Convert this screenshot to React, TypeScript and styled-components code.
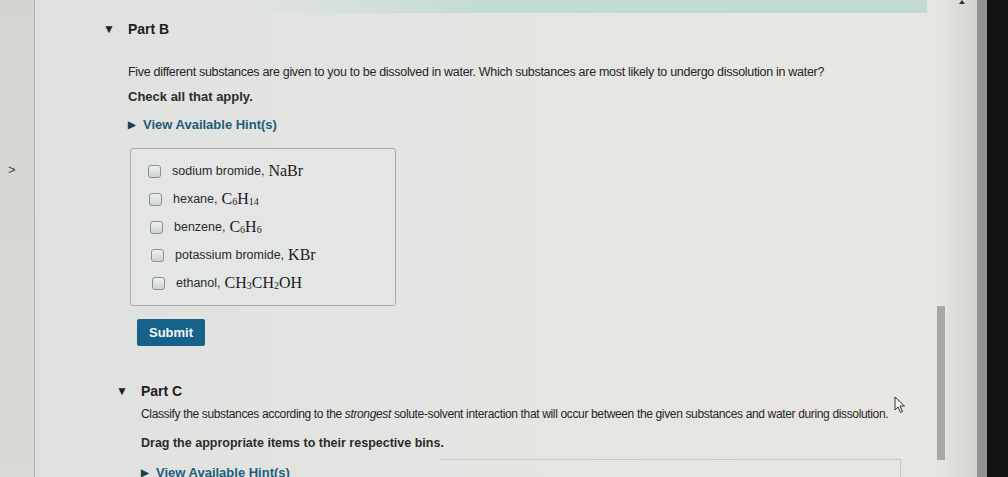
import React from "react";
import styled, { createGlobalStyle } from "styled-components";

const Global = createGlobalStyle`
  html, body { margin: 0; padding: 0; }
  body {
    width: 1008px; height: 477px; overflow: hidden;
    font-family: "Liberation Sans", Arial, sans-serif;
    background: #dcdcd9;
  }
`;

const Screen = styled.div`
  display: flex;
  width: 1008px;
  height: 477px;
  overflow: hidden;
`;

const Sidebar = styled.div`
  width: 35px;
  flex: none;
  background: linear-gradient(180deg, #d4d4d1 0%, #d9d9d6 100%);
  border-right: 1px solid #b4b4b0;
  padding-top: 160px;
  box-sizing: border-box;
`;

const Chevron = styled.div`
  margin-left: 8px;
  color: #444;
  font-size: 13px;
  line-height: 20px;
`;

const Main = styled.div`
  width: 900px;
  flex: none;
  display: flex;
  flex-direction: column;
  background: linear-gradient(90deg, #dfe1e0 0%, #e4e5e2 45%, #e8e6e0 100%);
  position: relative;
  overflow: hidden;
  & > * { flex: none; }
`;

const TopBar = styled.div`
  height: 13px;
  margin-left: 200px;
  margin-right: 8px;
  background: linear-gradient(90deg, rgba(197, 220, 214, 0) 0%, #c4dbd5 35%, #c2dad3 100%);
`;

const Section = styled.section<{ $indent: number }>`
  display: flex;
  flex-direction: column;
  padding-left: ${(p) => p.$indent}px;
  & > * { flex: none; }
`;

const Header = styled.div<{ $top: number }>`
  display: flex;
  align-items: center;
  margin-top: ${(p) => p.$top}px;
  margin-left: -25px;
  height: 18px;
`;

const Caret = styled.span`
  width: 25px;
  font-size: 12px;
  color: #222;
  line-height: 18px;
`;

const Title = styled.h3`
  margin: 0;
  font-size: 14px;
  font-weight: bold;
  color: #1e1e1e;
`;

const Para = styled.p<{ $top: number; $bold?: boolean; $size?: number; $ls?: number }>`
  margin: ${(p) => p.$top}px 0 0 0;
  font-size: ${(p) => p.$size ?? 13}px;
  line-height: 16px;
  letter-spacing: ${(p) => p.$ls ?? 0}px;
  font-weight: ${(p) => (p.$bold ? "bold" : "normal")};
  color: ${(p) => (p.$bold ? "#2c2c2c" : "#262626")};
  white-space: nowrap;
`;

const HintRow = styled.div<{ $top: number }>`
  display: flex;
  align-items: flex-start;
  margin-top: ${(p) => p.$top}px;
`;

const Hint = styled.a`
  display: flex;
  align-items: center;
  gap: 7px;
  font-size: 13px;
  font-weight: bold;
  color: #1f5d78;
  text-decoration: none;
  line-height: 16px;
  white-space: nowrap;
  cursor: pointer;
`;

const HintCaret = styled.span`
  font-size: 10px;
  color: #1f3f4f;
`;

const BoxEdge = styled.div`
  flex: 1;
  margin-left: 150px;
  margin-right: 34px;
  margin-top: -6px;
  height: 20px;
  border-top: 1px solid #c9c8c3;
  border-right: 1px solid #c9c8c3;
`;

const Options = styled.div`
  margin-top: 15px;
  margin-left: 2px;
  width: 266px;
  height: 158px;
  box-sizing: border-box;
  border: 1px solid #a9aaa8;
  border-radius: 3px;
  background: #e4e6e5;
  padding: 13px 0 0 17px;
  display: flex;
  flex-direction: column;
  gap: 10px;
`;

const Option = styled.label<{ $shift: number }>`
  display: flex;
  align-items: center;
  height: 18px;
  padding-left: ${(p) => p.$shift}px;
  font-size: 12.5px;
  color: #2a2a2a;
  cursor: pointer;
`;

const Check = styled.span`
  width: 11px;
  height: 11px;
  border: 1px solid #8d9091;
  border-radius: 3px;
  background: linear-gradient(180deg, #eef0f0 0%, #cfd3d4 100%);
  margin-right: 11px;
  flex: none;
`;

const Formula = styled.span`
  font-family: "Liberation Serif", "Times New Roman", serif;
  font-size: 16px;
  color: #1c1c1c;
  margin-left: 4px;
  sub {
    font-size: 10px;
    vertical-align: -1px;
  }
`;

const Submit = styled.button`
  margin-top: 13px;
  margin-left: 9px;
  align-self: flex-start;
  width: 68px;
  height: 27px;
  border: none;
  border-radius: 2px;
  background: #17628a;
  color: #f2f6f8;
  font-family: "Liberation Sans", Arial, sans-serif;
  font-size: 13px;
  font-weight: bold;
  cursor: pointer;
`;

const ScrollTrack = styled.div`
  width: 12px;
  flex: none;
  background: #e6e4de;
  display: flex;
  flex-direction: column;
`;

const Thumb = styled.div`
  margin-top: 306px;
  margin-left: 2px;
  width: 8px;
  height: 154px;
  background: #a9a8a5;
`;

const Gutter = styled.div`
  width: 30px;
  flex: none;
  background: linear-gradient(90deg, #e2e0da 0%, #d6d4cf 100%);
  display: flex;
  justify-content: center;
`;

const UpArrow = styled.div`
  width: 0;
  height: 0;
  border-left: 3px solid transparent;
  border-right: 3px solid transparent;
  border-bottom: 4px solid #333;
`;

const Band = styled.div`
  width: 10px;
  flex: none;
  background: #939190;
`;

const Bezel = styled.div`
  flex: 1;
  background: #121212;
`;

const Pointer = styled.svg`
  position: absolute;
  left: 859px;
  top: 396px;
`;

const options: { name: string; formula: React.ReactNode; shift: number }[] = [
  { name: "sodium bromide,", formula: <>NaBr</>, shift: 0 },
  { name: "hexane,", formula: <>C<sub>6</sub>H<sub>14</sub></>, shift: 1 },
  { name: "benzene,", formula: <>C<sub>6</sub>H<sub>6</sub></>, shift: 2 },
  { name: "potassium bromide,", formula: <>KBr</>, shift: 3 },
  { name: "ethanol,", formula: <>CH<sub>3</sub>CH<sub>2</sub>OH</>, shift: 4 },
];

export default function App() {
  return (
    <>
      <Global />
      <Screen>
        <Sidebar>
          <Chevron>&gt;</Chevron>
        </Sidebar>
        <Main>
          <TopBar />
          <Section $indent={93}>
            <Header $top={7}>
              <Caret>▼</Caret>
              <Title>Part B</Title>
            </Header>
            <Para $top={26} $size={12.5} $ls={-0.3}>
              Five different substances are given to you to be dissolved in water. Which substances are most likely to undergo dissolution in water?
            </Para>
            <Para $top={9} $bold>Check all that apply.</Para>
            <HintRow $top={12}>
              <Hint>
                <HintCaret>▶</HintCaret>View Available Hint(s)
              </Hint>
            </HintRow>
            <Options>
              {options.map((o) => (
                <Option key={o.name} $shift={o.shift}>
                  <Check />
                  {o.name}
                  <Formula>{o.formula}</Formula>
                </Option>
              ))}
            </Options>
            <Submit>Submit</Submit>
          </Section>
          <Section $indent={106}>
            <Header $top={36}>
              <Caret>▼</Caret>
              <Title>Part C</Title>
            </Header>
            <Para $top={6} $size={12} $ls={-0.35}>
              Classify the substances according to the <i>strongest</i> solute-solvent interaction that will occur between the given substances and water during dissolution.
            </Para>
            <Para $top={13} $bold $size={12.5}>Drag the appropriate items to their respective bins.</Para>
            <HintRow $top={14}>
              <Hint>
                <HintCaret>▶</HintCaret>View Available Hint(s)
              </Hint>
              <BoxEdge />
            </HintRow>
          </Section>
          <Pointer width="12" height="18" viewBox="0 0 12 18">
            <path d="M1 1 L1 14 L4 11 L6.5 16.5 L8.5 15.5 L6 10 L10.5 10 Z" fill="#f4f4f4" stroke="#333" strokeWidth="1" strokeLinejoin="round" />
          </Pointer>
        </Main>
        <ScrollTrack>
          <Thumb />
        </ScrollTrack>
        <Gutter>
          <UpArrow />
        </Gutter>
        <Band />
        <Bezel />
      </Screen>
    </>
  );
}
